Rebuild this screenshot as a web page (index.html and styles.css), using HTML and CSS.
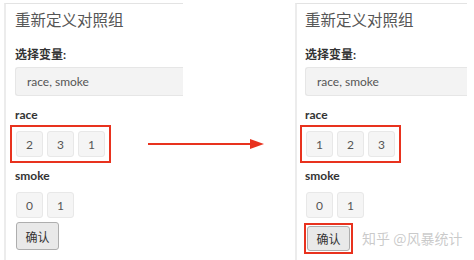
FILE: index.html
```html
<!DOCTYPE html>
<html lang="en">
<head>
    <meta charset="UTF-8">
    <meta name="viewport" content="width=device-width, initial-scale=1.0">
    <title>重新定义对照组</title>
    <link rel="stylesheet" href="styles.css">
</head>
<body>
    <div class="shot">
        <div class="panel panel-before">
            <h2 class="title">重新定义对照组</h2>
            <label class="field-label">选择变量:</label>
            <div class="select-box">race, smoke</div>

            <div class="group-label">race</div>
            <div class="levels marked">
                <button class="level">2</button>
                <button class="level">3</button>
                <button class="level">1</button>
            </div>

            <div class="group-label">smoke</div>
            <div class="levels">
                <button class="level">0</button>
                <button class="level">1</button>
            </div>

            <button class="confirm">确认</button>
        </div>

        <div class="panel panel-after">
            <h2 class="title">重新定义对照组</h2>
            <label class="field-label">选择变量:</label>
            <div class="select-box">race, smoke</div>

            <div class="group-label">race</div>
            <div class="levels marked">
                <button class="level">1</button>
                <button class="level">2</button>
                <button class="level">3</button>
            </div>

            <div class="group-label">smoke</div>
            <div class="levels">
                <button class="level">0</button>
                <button class="level">1</button>
            </div>

            <div class="confirm-frame">
                <button class="confirm">确认</button>
            </div>
        </div>

        <!-- annotation arrow between the two screenshots -->
        <svg class="arrow" width="116" height="12" viewBox="0 0 116 12">
            <line x1="0" y1="6" x2="104" y2="6" stroke="#e8321e" stroke-width="2.2"/>
            <polygon points="102,1 116,6 102,11" fill="#e8321e"/>
        </svg>

        <div class="watermark">知乎 @风暴统计</div>
    </div>
</body>
</html>
```

FILE: styles.css
```css
body {
    margin: 0;
    padding: 0;
    background-color: #fff;
    font-family: Lato, "Noto Sans CJK SC", sans-serif;
    color: #333;
}

.shot {
    position: relative;
    width: 474px;
    height: 260px;
    overflow: hidden;
    display: flex;
    align-items: flex-start;
}

.panel {
    box-sizing: border-box;
    height: 257px;
    margin-top: 3px;
    padding: 6px 0 0 10px;
    border-top: 1px solid #e3e3e3;
    border-left: 2px solid #ececec;
    overflow: hidden;
    display: flex;
    flex-direction: column;
    align-items: flex-start;
}

.panel-before {
    width: 179px;
    margin-left: 4px;
    padding-left: 9px;
}

.panel-after {
    width: 172px;
    margin-left: 112px;
    padding-left: 8px;
}

.title {
    margin: 0;
    font-size: 15.5px;
    line-height: 20px;
    font-weight: 400;
    color: #555;
}

.field-label {
    margin-top: 17px;
    font-size: 12px;
    line-height: 16px;
    font-weight: 700;
    color: #333;
}

.select-box {
    box-sizing: border-box;
    width: 100%;
    height: 29px;
    margin-top: 4px;
    padding-left: 11px;
    line-height: 27px;
    font-size: 12px;
    color: #555;
    background-color: #f3f3f3;
    border: 1px solid #e6e6e6;
    border-right: none;
    border-radius: 3px 0 0 3px;
}

.group-label {
    margin-top: 12px;
    font-size: 12px;
    line-height: 14px;
    font-weight: 700;
    color: #333;
}

.levels {
    display: flex;
    gap: 4px;
    margin: 9px 0 0 1px;
}

.levels.marked {
    outline: 2px solid #e8321e;
    outline-offset: 4px;
}

.level {
    box-sizing: border-box;
    width: 27px;
    height: 26px;
    padding: 0;
    font-family: inherit;
    font-size: 12px;
    color: #555;
    background-color: #f5f5f5;
    border: 1px solid #e8e8e8;
    border-radius: 3px;
}

.confirm {
    box-sizing: border-box;
    width: 43px;
    height: 28px;
    margin: 4px 0 0 1px;
    padding: 0;
    font-family: inherit;
    font-size: 12px;
    color: #333;
    background-color: #e9e9e9;
    border: 1px solid #aeaeae;
    border-radius: 3px;
}

.confirm-frame {
    display: flex;
    margin: 5px 0 0 -1px;
    padding: 1px;
    border: 2px solid #e8321e;
}

.confirm-frame .confirm {
    height: 25px;
    margin: 0;
}

.arrow {
    position: absolute;
    left: 148px;
    top: 138px;
}

.watermark {
    position: absolute;
    left: 362px;
    top: 228px;
    font-family: "Noto Sans CJK SC", sans-serif;
    font-size: 14px;
    line-height: 20px;
    color: rgba(150, 150, 150, 0.5);
    white-space: nowrap;
}
```
